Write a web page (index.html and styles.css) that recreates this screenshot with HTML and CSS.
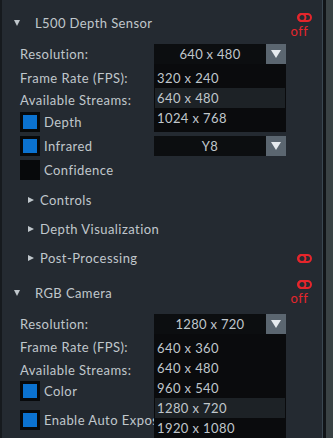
FILE: index.html
```html
<!DOCTYPE html>
<html>

<head>
    <link rel="stylesheet" href="styles.css">
</head>

<body>
    <div class="window">
        <div class="panel">

            <div class="sensor-head first">
                <span class="tri-down"></span>
                <span class="sensor-title">L500 Depth Sensor</span>
                <div class="status">
                    <svg class="toggle" width="15" height="9" viewBox="0 0 15 9">
                        <rect x="1" y="1" width="13" height="7" rx="3.5" fill="none" stroke="#e5262c" stroke-width="2"/>
                        <circle cx="5" cy="4.5" r="3.5" fill="none" stroke="#e5262c" stroke-width="2"/>
                    </svg>
                    <span class="off">off</span>
                </div>
            </div>

            <div class="row gap6">
                <span class="label">Resolution:</span>
                <div class="combo open">
                    <span class="combo-value">640 x 480</span>
                    <span class="combo-btn"><span class="tri-btn"></span></span>
                    <ul class="combo-list">
                        <li>320 x 240</li>
                        <li class="sel">640 x 480</li>
                        <li>1024 x 768</li>
                    </ul>
                </div>
            </div>
            <div class="row gap4">
                <span class="label">Frame Rate (FPS):</span>
            </div>
            <div class="row gap2">
                <span class="label">Available Streams:</span>
            </div>
            <div class="row gap2">
                <span class="check on"></span>
                <span class="check-label">Depth</span>
            </div>
            <div class="row gap4">
                <span class="check on"></span>
                <span class="check-label">Infrared</span>
                <div class="combo">
                    <span class="combo-value">Y8</span>
                    <span class="combo-btn"><span class="tri-btn"></span></span>
                </div>
            </div>
            <div class="row gap4">
                <span class="check"></span>
                <span class="check-label">Confidence</span>
            </div>

            <div class="sub gap10">
                <span class="tri-right"></span>Controls
            </div>
            <div class="sub gap9">
                <span class="tri-right"></span>Depth Visualization
            </div>
            <div class="sub gap9">
                <span class="tri-right"></span>Post-Processing
                <svg class="toggle sub-toggle" width="15" height="9" viewBox="0 0 15 9">
                    <rect x="1" y="1" width="13" height="7" rx="3.5" fill="none" stroke="#e5262c" stroke-width="2"/>
                    <circle cx="5" cy="4.5" r="3.5" fill="none" stroke="#e5262c" stroke-width="2"/>
                </svg>
            </div>

            <div class="sensor-head second">
                <span class="tri-down"></span>
                <span class="sensor-title">RGB Camera</span>
                <div class="status low">
                    <svg class="toggle" width="15" height="9" viewBox="0 0 15 9">
                        <rect x="1" y="1" width="13" height="7" rx="3.5" fill="none" stroke="#e5262c" stroke-width="2"/>
                        <circle cx="5" cy="4.5" r="3.5" fill="none" stroke="#e5262c" stroke-width="2"/>
                    </svg>
                    <span class="off">off</span>
                </div>
            </div>

            <div class="row gap6">
                <span class="label">Resolution:</span>
                <div class="combo open">
                    <span class="combo-value">1280 x 720</span>
                    <span class="combo-btn"><span class="tri-btn"></span></span>
                    <ul class="combo-list">
                        <li>640 x 360</li>
                        <li>640 x 480</li>
                        <li>960 x 540</li>
                        <li class="sel">1280 x 720</li>
                        <li>1920 x 1080</li>
                    </ul>
                </div>
            </div>
            <div class="row gap3">
                <span class="label">Frame Rate (FPS):</span>
            </div>
            <div class="row gap3">
                <span class="label">Available Streams:</span>
            </div>
            <div class="row gap1">
                <span class="check on"></span>
                <span class="check-label">Color</span>
            </div>
            <div class="row gap9">
                <span class="check on"></span>
                <span class="check-label">Enable Auto Exposure</span>
            </div>

        </div>
        <div class="gutter"></div>
    </div>
</body>

</html>
```

FILE: styles.css
```css
body {
    margin: 0;
    background: #3a4244;
    font-family: "Lato", "Open Sans", sans-serif;
    font-size: 13px;
    color: #c0c7cc;
}

.window {
    display: flex;
    height: 438px;
}

.panel {
    width: 320px;
    height: 438px;
    background: #242a31;
    border-left: 2px solid #161a1e;
    border-right: 1px solid #3b4852;
    position: relative;
    overflow: hidden;
}

.gutter {
    width: 3px;
    background: #111417;
}

/* sensor header */
.sensor-head {
    display: flex;
    height: 30px;
    padding-left: 12px;
    align-items: flex-start;
}

.sensor-head.first {
    margin-top: 8px;
}

.sensor-head.second {
    margin-top: 10px;
}

.sensor-title {
    line-height: 30px;
    letter-spacing: 0.4px;
}

.tri-down {
    width: 0;
    height: 0;
    border-left: 3.5px solid transparent;
    border-right: 3.5px solid transparent;
    border-top: 6px solid #c0c7cc;
    margin-top: 12px;
    margin-right: 15px;
}

.status {
    margin-left: auto;
    width: 24px;
    margin-right: 9px;
    display: flex;
    flex-direction: column;
    align-items: center;
    padding-top: 5px;
}

.status.low {
    padding-top: 2px;
}

.toggle {
    display: block;
    margin-left: 6px;
}

.off {
    color: #e5262c;
    line-height: 14px;
    margin-top: 2px;
    margin-right: 3px;
    letter-spacing: 0.5px;
}

/* rows */
.row {
    display: flex;
    align-items: center;
    height: 20px;
    padding-left: 18px;
}

.gap1 { margin-top: 1px; }
.gap2 { margin-top: 2px; }
.gap3 { margin-top: 3px; }
.gap4 { margin-top: 4px; }
.gap6 { margin-top: 6px; }
.gap9 { margin-top: 9px; }
.gap10 { margin-top: 10px; }

.label {
    width: 134px;
    letter-spacing: 0.45px;
    white-space: nowrap;
}

.check {
    width: 14px;
    height: 14px;
    border: 3px solid #07090b;
    background: #07090b;
    flex: none;
}

.check.on {
    background: #0b72d0;
}

.check-label {
    margin-left: 4px;
    width: 110px;
    overflow: hidden;
    letter-spacing: 0.45px;
    white-space: nowrap;
}

/* combo box */
.combo {
    position: relative;
    width: 132px;
    height: 20px;
    background: #0c0e10;
    display: flex;
}

.combo-value {
    flex: 1;
    text-align: center;
    line-height: 20px;
    letter-spacing: 0.3px;
}

.combo-btn {
    width: 20px;
    height: 20px;
    background: #5b6670;
    display: flex;
    align-items: center;
    justify-content: center;
}

.tri-btn {
    width: 0;
    height: 0;
    border-left: 5.5px solid transparent;
    border-right: 5.5px solid transparent;
    border-top: 8px solid #e6eaee;
}

.combo-list {
    position: absolute;
    top: 20px;
    left: 0;
    width: 132px;
    margin: 0;
    padding: 4px 0;
    list-style: none;
    background: #0a0b0d;
    z-index: 2;
}

.combo-list li {
    height: 20px;
    line-height: 20px;
    padding-left: 2px;
    margin: 0 1px;
    letter-spacing: 0.4px;
}

.combo-list li.sel {
    background: #1d2226;
}

/* collapsed sub sections */
.sub {
    display: flex;
    align-items: center;
    height: 20px;
    padding-left: 26px;
    letter-spacing: 0.45px;
}

.tri-right {
    width: 0;
    height: 0;
    border-top: 3.5px solid transparent;
    border-bottom: 3.5px solid transparent;
    border-left: 6px solid #c0c7cc;
    margin-right: 6px;
}

.sub-toggle {
    margin-left: auto;
    margin-right: 10px;
}
```
